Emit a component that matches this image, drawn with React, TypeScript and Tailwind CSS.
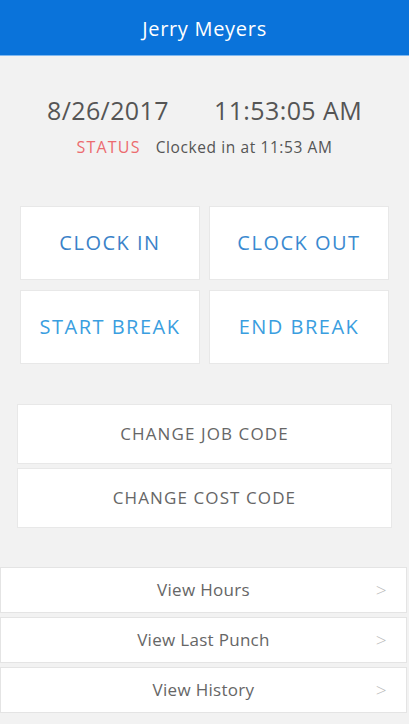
import React from "react";

export default function App() {
  const punches = [
    { label: "CLOCK IN", color: "text-[#3a82c8]" },
    { label: "CLOCK OUT", color: "text-[#3a8ad0]" },
    { label: "START BREAK", color: "text-[#3a9ee0]" },
    { label: "END BREAK", color: "text-[#3a9ee0]" },
  ];
  const codes = ["CHANGE JOB CODE", "CHANGE COST CODE"];
  const views = ["View Hours", "View Last Punch", "View History"];

  return (
    <div className="min-h-screen bg-[#f2f2f2] font-['Open_Sans',sans-serif]">
      <header className="flex h-[56px] items-center justify-center border-b border-[#7fb8f0] bg-[#0a73da] pt-[2px] text-[20px] tracking-[0.7px] text-white">
        Jerry Meyers
      </header>

      <div className="flex flex-col items-center pt-[35px]">
        <div className="flex gap-[45px] text-[25px] leading-[38px] tracking-[0.4px] text-[#555]">
          <span>8/26/2017</span>
          <span>11:53:05 AM</span>
        </div>
        <div className="mt-[8px] flex items-baseline gap-[15px] leading-[20px]">
          <span className="text-[16px] tracking-[1.2px] text-[#ec6b6f]">STATUS</span>
          <span className="text-[15.5px] tracking-[0.6px] text-[#555]">Clocked in at 11:53 AM</span>
        </div>
      </div>

      <section className="mt-[49px] grid grid-cols-2 gap-x-[9px] gap-y-[10px] px-[20px]">
        {punches.map((p) => (
          <button
            key={p.label}
            className={`flex h-[74px] items-center justify-center border border-[#e8e8e8] bg-white text-[20px] tracking-[1.5px] ${p.color}`}
          >
            {p.label}
          </button>
        ))}
      </section>

      <section className="mt-[40px] flex flex-col gap-[4px] px-[17px]">
        {codes.map((c) => (
          <button
            key={c}
            className="flex h-[60px] items-center justify-center border border-[#e8e8e8] bg-white text-[17px] tracking-[1.1px] text-[#666]"
          >
            {c}
          </button>
        ))}
      </section>

      <section className="mt-[39px] flex flex-col gap-[4px] pb-[12px] pr-[2px]">
        {views.map((v) => (
          <button
            key={v}
            className="relative flex h-[46px] items-center justify-center border border-[#e4e4e4] bg-white text-[17px] tracking-[0.3px] text-[#666]"
          >
            {v}
            <span className="absolute right-[19px] text-[19px] font-light text-[#bbb]">&gt;</span>
          </button>
        ))}
      </section>
    </div>
  );
}
